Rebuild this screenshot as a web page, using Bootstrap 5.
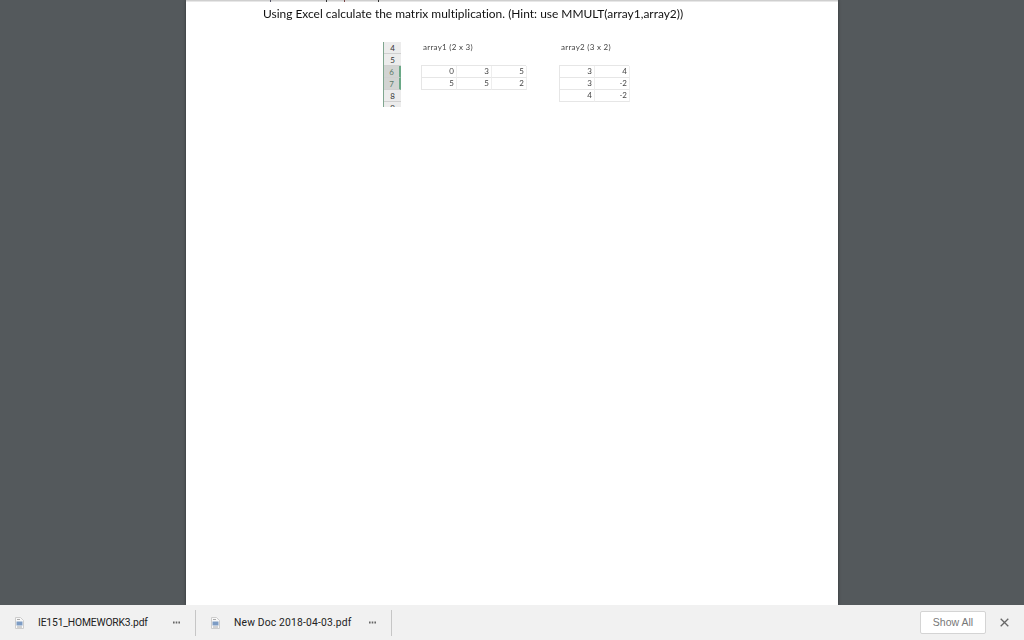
<!DOCTYPE html>
<html lang="en">
<head>
<meta charset="utf-8">
<title>PDF viewer</title>
<link href="https://cdn.jsdelivr.net/npm/bootstrap@5.3.0/dist/css/bootstrap.min.css" rel="stylesheet">
<style>
html,body{height:100%;margin:0;overflow:hidden}
.viewer{height:640px;background:#54595c}
.stage{flex:1 1 0;min-height:0;overflow:hidden}
.sheet{width:652px;background:#fff;box-shadow:0 0 3px rgba(0,0,0,.45)}
.specks{display:block;width:652px;height:2px}
.question{padding:4px 0 0 77px;font:11.95px/15px Lato,"Open Sans",sans-serif;font-variant-ligatures:none;color:#111;height:40px;margin:0;filter:blur(.2px)}
.xl{padding-left:197px;font-family:Lato,"Open Sans",sans-serif;color:#444;filter:blur(.35px)}
.rowhead{width:18px;height:65px;overflow:hidden;background:#ececec;border-left:1px solid #7fa68f;flex:none;margin-right:20px}
.rowhead div{height:12px;line-height:12px;text-align:center;border-bottom:1px solid #d0d0d0;color:#333;font-size:8px}
.rowhead .sel{background:#d2d4d2;border-right:2px solid #6aa886;color:#5c7a68}
.arr{width:105px;margin-right:33px}
.arr.two{width:70px}
.arrname{height:23px;line-height:10px;padding:0 0 0 2px;font-size:8px;letter-spacing:.27px;color:#444;white-space:nowrap}
.xgrid{display:grid;grid-template-columns:repeat(3,35px);border-top:1px solid #e6e6e6;border-left:1px solid #e6e6e6}
.two .xgrid{grid-template-columns:repeat(2,35px)}
.xgrid span{height:12px;line-height:11px;text-align:right;padding-right:2px;border-right:1px solid #eee;border-bottom:1px solid #e6e6e6;font-size:8px}
.dlbar{height:35px;background:#f1f1f1;flex:none;font:10.3px/1 Roboto,"Liberation Sans",Arial,sans-serif;color:#222}
.dlitem{height:26px;border-right:1px solid #c6c6c6}
.dlfirst,.dlsecond{width:196px;padding-left:15px}
.fileico{flex:none;width:9px;height:12px;margin-right:14px}
.dlname{width:134px;white-space:nowrap;padding-top:2px}
.dlfirst .dlname{letter-spacing:-.15px}
.dlsecond .dlname{letter-spacing:.18px}
.dots{width:9px;height:3px;flex:none}
.showall{width:66px;height:23px;padding:0;background:#fff;border:1px solid #d4d4d4;border-radius:2px;color:#777;font:10.5px/1 "Liberation Sans",Arial,sans-serif}
.closer{width:38px;padding-right:2px;line-height:0}
</style>
</head>
<body>
<div class="viewer d-flex flex-column">
  <div class="stage d-flex justify-content-center">
    <div class="sheet">
      <svg class="specks" viewBox="0 0 652 2" aria-hidden="true"><rect width="652" height="1.500" fill="#cfcfcf"/><rect x="84" width="1" height="2" fill="#556"/><rect x="140" width="1" height="2" fill="#333"/><rect x="158" width="1" height="2" fill="#744"/><rect x="192" width="1" height="2" fill="#333"/></svg>
      <p class="question">Using Excel calculate the matrix multiplication. (Hint: use MMULT(array1,array2))</p>
      <div class="xl d-flex">
        <div class="rowhead">
          <div>4</div><div>5</div><div class="sel">6</div><div class="sel">7</div><div>8</div><div>9</div>
        </div>
        <div class="arr">
          <div class="arrname">array1 (2 x 3)</div>
          <div class="xgrid"><span>0</span><span>3</span><span>5</span><span>5</span><span>5</span><span>2</span></div>
        </div>
        <div class="arr two">
          <div class="arrname">array2 (3 x 2)</div>
          <div class="xgrid"><span>3</span><span>4</span><span>3</span><span>-2</span><span>4</span><span>-2</span></div>
        </div>
      </div>
    </div>
  </div>
  <div class="dlbar d-flex align-items-center">
    <div class="dlitem dlfirst d-flex align-items-center">
      <svg class="fileico" viewBox="0 0 9 12"><path d="M.5.5h5l3 3v8H.5z" fill="#f8f8f8" stroke="#cdcdcd"/><rect x="1.500" y="4.500" width="6" height="4" fill="#7d9cc4"/><path d="M2 2.500h3M2 10h5" stroke="#aaa"/></svg>
      <span class="dlname">IE151_HOMEWORK3.pdf</span>
      <svg class="dots" viewBox="0 0 9 3"><path d="M1 .4h1.600v2H1zM3.700.4h1.600v2H3.700zM6.400.4H8v2H6.400z" fill="#666"/></svg>
    </div>
    <div class="dlitem dlsecond d-flex align-items-center">
      <svg class="fileico" viewBox="0 0 9 12"><path d="M.5.5h5l3 3v8H.5z" fill="#f8f8f8" stroke="#cdcdcd"/><rect x="1.500" y="4.500" width="6" height="4" fill="#7d9cc4"/><path d="M2 2.500h3M2 10h5" stroke="#aaa"/></svg>
      <span class="dlname">New Doc 2018-04-03.pdf</span>
      <svg class="dots" viewBox="0 0 9 3"><path d="M1 .4h1.600v2H1zM3.700.4h1.600v2H3.700zM6.400.4H8v2H6.400z" fill="#666"/></svg>
    </div>
    <div class="ms-auto d-flex align-items-center">
      <button type="button" class="btn showall">Show All</button>
      <div class="closer d-flex justify-content-center">
        <svg width="9" height="9" viewBox="0 0 9 9" aria-label="Close"><path d="M.7.7l7.600 7.600M8.300.7L.7 8.300" stroke="#666" stroke-width="1.300"/></svg>
      </div>
    </div>
  </div>
</div>
<script src="https://cdn.jsdelivr.net/npm/bootstrap@5.3.0/dist/js/bootstrap.bundle.min.js"></script>
</body>
</html>
